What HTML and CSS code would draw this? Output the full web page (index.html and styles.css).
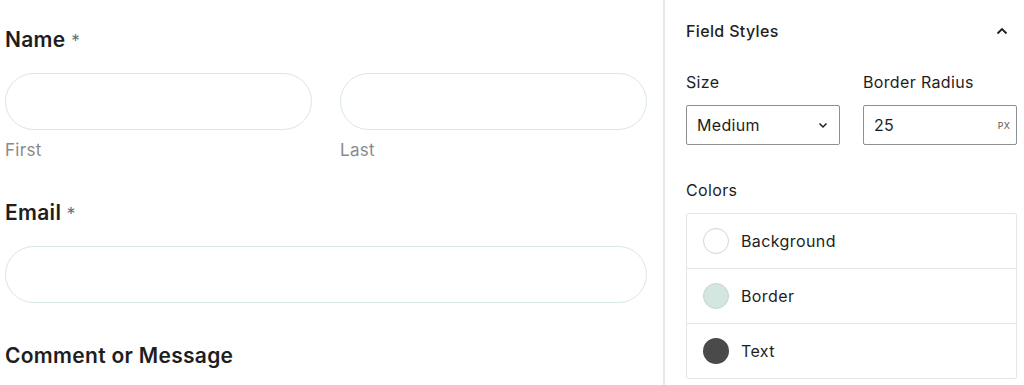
FILE: index.html
```html
<!DOCTYPE html>
<html>
<head>
<meta charset="utf-8">
<link rel="stylesheet" href="styles.css">
</head>
<body>
<div class="page">
  <main class="form">
    <div class="field">
      <div class="label">Name <span class="req">*</span></div>
      <div class="name-row">
        <div class="sub">
          <div class="input"></div>
          <div class="hint">First</div>
        </div>
        <div class="sub">
          <div class="input"></div>
          <div class="hint">Last</div>
        </div>
      </div>
    </div>
    <div class="field email">
      <div class="label">Email <span class="req">*</span></div>
      <div class="input"></div>
    </div>
    <div class="field comment">
      <div class="label">Comment or Message</div>
    </div>
  </main>
  <aside class="sidebar">
    <div class="panel-head">
      <span class="panel-title">Field Styles</span>
      <svg class="chev-up" width="16" height="16" viewBox="0 0 16 16"><path d="M3.5 10.5 L8 6 L12.5 10.5" fill="none" stroke="#1e1e1e" stroke-width="1.8"/></svg>
    </div>
    <div class="controls">
      <div class="control">
        <div class="ctl-label">Size</div>
        <div class="select">
          <span>Medium</span>
          <svg width="12" height="12" viewBox="0 0 12 12"><path d="M2.5 4.5 L6 8 L9.5 4.5" fill="none" stroke="#1e1e1e" stroke-width="1.5"/></svg>
        </div>
      </div>
      <div class="control">
        <div class="ctl-label">Border Radius</div>
        <div class="select">
          <span>25</span>
          <span class="unit">PX</span>
        </div>
      </div>
    </div>
    <div class="ctl-label colors-label">Colors</div>
    <div class="colors">
      <div class="color-row"><span class="swatch sw-bg"></span><span>Background</span></div>
      <div class="color-row"><span class="swatch sw-border"></span><span>Border</span></div>
      <div class="color-row"><span class="swatch sw-text"></span><span>Text</span></div>
    </div>
  </aside>
</div>
</body>
</html>
```
FILE: styles.css
```css
* { box-sizing: border-box; }
html, body { margin: 0; padding: 0; background: #fff; }
body {
  font-family: Inter, "Noto Sans", "Liberation Sans", sans-serif;
  color: #1e1e1e;
  width: 1024px;
  height: 385px;
  overflow: hidden;
}
.page {
  display: flex;
  height: 385px;
}
.form {
  width: 663px;
  padding: 28px 16px 0 5px;
}
.label {
  font-size: 21px;
  font-weight: 600;
  line-height: 24px;
  letter-spacing: 0.3px;
  color: #1e1e1e;
  margin-bottom: 20px;
}
.req {
  font-weight: 400;
  color: #6a6a6a;
  font-size: 17px;
}
.name-row {
  display: grid;
  grid-template-columns: 1fr 1fr;
  column-gap: 28px;
}
.input {
  height: 57px;
  border: 1.5px solid #d6e8e2;
  border-radius: 29px;
  background: #fff;
}
.hint {
  margin-top: 10px;
  font-size: 17px;
  line-height: 20px;
  letter-spacing: 0.3px;
  color: #8a8a8a;
}
.email { margin-top: 41px; }
.email .label { margin-bottom: 20px; }
.email .input { height: 57px; }
.comment { margin-top: 41px; }
.sidebar {
  width: 361px;
  border-left: 2px solid #e8e8e8;
  padding: 21px 7px 0 21px;
  font-size: 16px;
}
.panel-head {
  display: flex;
  justify-content: space-between;
  align-items: center;
  height: 20px;
  padding-right: 7px;
}
.panel-title {
  font-size: 16px;
  font-weight: 500;
  letter-spacing: 0.35px;
  color: #1e1e1e;
}
.chev-up { display: block; }
.controls {
  display: grid;
  grid-template-columns: 154px 154px;
  column-gap: 23px;
  margin-top: 31px;
}
.ctl-label {
  font-size: 16px;
  line-height: 20px;
  letter-spacing: 0.35px;
  color: #1e1e1e;
  margin-bottom: 13px;
}
.select {
  height: 40px;
  border: 1px solid #8c8f94;
  border-radius: 2px;
  display: flex;
  align-items: center;
  justify-content: space-between;
  padding: 0 10px 0 10px;
  font-size: 16px;
  letter-spacing: 0.3px;
  color: #1e1e1e;
}
.select svg { display: block; }
.unit {
  font-size: 9px;
  color: #555;
  letter-spacing: 0.2px;
  margin-right: -4px;
}
.colors-label { margin-top: 35px; }
.colors {
  border: 1px solid #e6e6e6;
  border-radius: 2px;
  width: 331px;
}
.color-row {
  display: flex;
  align-items: center;
  gap: 12px;
  height: 54px;
  padding-left: 16px;
  font-size: 16px;
  letter-spacing: 0.4px;
  color: #1e1e1e;
}
.color-row + .color-row { border-top: 1px solid #e6e6e6; height: 55px; }
.swatch {
  width: 26px;
  height: 26px;
  border-radius: 50%;
  display: inline-block;
  flex: none;
}
.sw-bg { background: #fff; border: 1px solid #d4d4d4; }
.sw-border { background: #d3e6e0; border: 1px solid #c8d4d0; }
.sw-text { background: #4a4a4a; }
```
